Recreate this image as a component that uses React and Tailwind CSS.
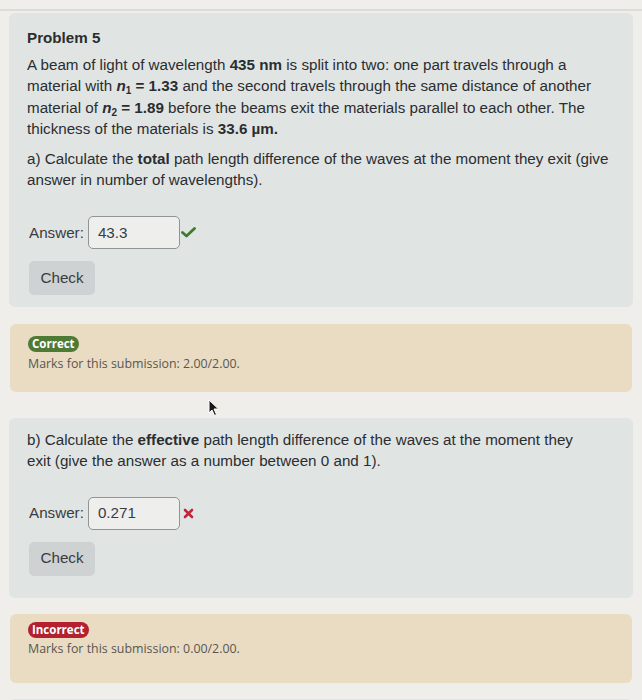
import React from 'react';

function Tick() {
  return (
    <svg width="15" height="11" viewBox="0 0 15 11" className="ml-[1px]">
      <path d="M1.5 5.5 L5.5 9 L13.5 1.5" fill="none" stroke="#3f7a2e" strokeWidth="2.8" strokeLinecap="round" strokeLinejoin="round" />
    </svg>
  );
}

function Cross() {
  return (
    <svg width="11" height="11" viewBox="0 0 11 11" className="ml-[3px]">
      <path d="M2 2 L9 9 M9 2 L2 9" fill="none" stroke="#c0263a" strokeWidth="2.6" strokeLinecap="round" />
    </svg>
  );
}

function Sub({ children }) {
  return <span className="relative top-[3px] text-[10px] leading-none">{children}</span>;
}

function AnswerRow({ value, mark }) {
  return (
    <div className="flex items-center">
      <span className="mr-[4px] text-[#3a3c3f]">Answer:</span>
      <div className="flex h-[33px] w-[92px] items-center rounded-[5px] border border-[#8f9495] bg-[#eeefed] px-[9px] text-[#3a3c3f]">
        {value}
      </div>
      {mark}
    </div>
  );
}

function CheckButton() {
  return (
    <button className="mt-[12px] h-[34px] w-[66px] rounded-[5px] bg-[#ced2d3] text-[#3a3c3f]">Check</button>
  );
}

function Feedback({ badge, badgeClass, marks, pad }) {
  return (
    <div className={`mx-[10px] rounded-[6px] bg-[#e9dcc3] px-[18px] font-['Open_Sans',sans-serif] text-[12.4px] text-[#5a5650] ${pad}`}>
      <span className={`inline-block rounded-full px-[4px] text-[11.5px] font-bold leading-[16px] text-white ${badgeClass}`}>{badge}</span>
      <div className="mt-[2px] leading-[16px]">{marks}</div>
    </div>
  );
}

export default function App() {
  return (
    <div className="relative h-[700px] overflow-hidden bg-[#efeeea] pt-[13px] font-['Liberation_Sans',Arial,sans-serif] text-[15.2px] text-[#2b2d30]">
      <div className="absolute left-0 right-0 top-[9px] h-[2px] bg-[#dcdcd8]" />

      <div className="relative mx-[9px] rounded-[6px] bg-[#e0e5e4] px-[18px] pb-[12px] pt-[15px]">
        <div className="font-bold leading-[20px]">Problem 5</div>
        <p className="mt-[6px] leading-[21.4px]">
          A beam of light of wavelength <b>435 nm</b> is split into two: one part travels through a<br />
          material with <b><i>n</i><Sub>1</Sub> = 1.33</b> and the second travels through the same distance of another<br />
          material of <b><i>n</i><Sub>2</Sub> = 1.89</b> before the beams exit the materials parallel to each other. The<br />
          thickness of the materials is <b>33.6 µm.</b>
        </p>
        <p className="mt-[8px] leading-[21.4px]">
          a) Calculate the <b>total</b> path length difference of the waves at the moment they exit (give<br />
          answer in number of wavelengths).
        </p>
        <div className="ml-[2px] mt-[26px]">
          <AnswerRow value="43.3" mark={<Tick />} />
          <CheckButton />
        </div>
      </div>

      <div className="mt-[17px]">
        <Feedback badge="Correct" badgeClass="bg-[#4e7a35]" marks="Marks for this submission: 2.00/2.00." pad="pt-[11px] pb-[20px]" />
      </div>

      <div className="mx-[9px] mt-[26px] rounded-[6px] bg-[#e0e5e4] px-[18px] pb-[22px] pt-[11px]">
        <p className="leading-[21.4px]">
          b) Calculate the <b>effective</b> path length difference of the waves at the moment they<br />
          exit (give the answer as a number between 0 and 1).
        </p>
        <div className="ml-[2px] mt-[25px]">
          <AnswerRow value="0.271" mark={<Cross />} />
          <CheckButton />
        </div>
      </div>

      <div className="mt-[16px]">
        <Feedback badge="Incorrect" badgeClass="bg-[#b3202f]" marks="Marks for this submission: 0.00/2.00." pad="pt-[7px] pb-[26px]" />
      </div>

      <div className="mx-[9px] mt-[16px] h-[40px] rounded-[6px] bg-[#e0e5e4]" />

      <svg className="absolute left-[208px] top-[399px]" width="12" height="18" viewBox="0 0 12 18">
        <path d="M1 1 L1 14 L4 11 L6.5 16.5 L8.5 15.5 L6 10 L10.5 10 Z" fill="#1b1b1b" stroke="#ffffff" strokeWidth="1" />
      </svg>
    </div>
  );
}
